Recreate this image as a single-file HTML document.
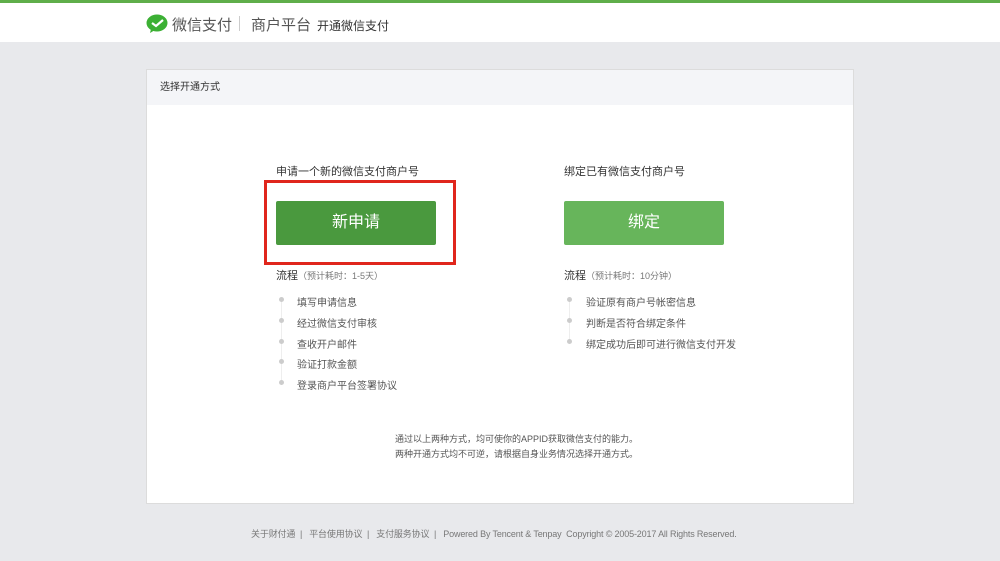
<html><head><style>
body{margin:0;width:1000px;height:561px;background:#e8e9ec;font-family:"Liberation Sans","Noto Sans CJK SC",sans-serif;position:relative;overflow:hidden;color:#333}
.a{position:absolute;white-space:nowrap}
.top{position:absolute;left:0;top:0;width:1000px;height:42px;background:#fff;border-top:3px solid #5fae4a;box-sizing:border-box}
.card{position:absolute;left:146px;top:69px;width:708px;height:435px;background:#fff;border:1px solid #dcdcdc;box-sizing:border-box}
.ch{height:35px;background:#f4f5f8;font-size:10px;line-height:35px;padding-left:13px}
.btn{position:absolute;width:160px;height:44px;color:#fff;font-size:16px;line-height:44px;text-align:center;border-radius:2px}
.li{position:absolute;font-size:10px;color:#555}
.dot{position:absolute;width:5px;height:5px;border-radius:50%;background:#ccc}
.ft{font-size:9px;color:#777}
</style></head><body>
<div class="top">
<svg class="a" style="left:146px;top:11px" width="22" height="20" viewBox="0 0 22 20"><ellipse cx="11" cy="9" rx="10.5" ry="8.5" fill="#3cb034"/><path d="M5 15 L4 19 L9 16Z" fill="#3cb034"/><path d="M6 9 L10 12 L17 6" stroke="#fff" stroke-width="2.2" fill="none"/></svg>
<div class="a" style="left:172px;top:11px;font-size:15px;color:#555">微信支付</div>
<div class="a" style="left:239px;top:13px;width:1px;height:15px;background:#ccc"></div>
<div class="a" style="left:251px;top:11px;font-size:15px;color:#555">商户平台</div>
<div class="a" style="left:317px;top:14px;font-size:12px;color:#333">开通微信支付</div>
</div>
<div class="card"><div class="ch">选择开通方式</div></div>
<div class="a" style="left:276px;top:163px;font-size:11px">申请一个新的微信支付商户号</div>
<div class="a" style="left:564px;top:163px;font-size:11px">绑定已有微信支付商户号</div>
<div class="a" style="left:264px;top:180px;width:192px;height:85px;border:3px solid #e0261c;box-sizing:border-box"></div>
<div class="btn" style="left:276px;top:201px;background:#4a993e">新申请</div>
<div class="btn" style="left:564px;top:201px;background:#67b55b">绑定</div>
<div class="a" style="left:276px;top:267px;font-size:11px">流程<span style="font-size:9px;color:#777">（预计耗时：1-5天）</span></div>
<div class="a" style="left:564px;top:267px;font-size:11px">流程<span style="font-size:9px;color:#777">（预计耗时：10分钟）</span></div>
<div class="a" style="left:281px;top:300px;width:1px;height:85px;background:#eee"></div>
<div class="dot" style="left:279px;top:297px"></div><div class="li" style="left:297px;top:294px">填写申请信息</div>
<div class="dot" style="left:279px;top:318px"></div><div class="li" style="left:297px;top:315px">经过微信支付审核</div>
<div class="dot" style="left:279px;top:339px"></div><div class="li" style="left:297px;top:336px">查收开户邮件</div>
<div class="dot" style="left:279px;top:359px"></div><div class="li" style="left:297px;top:356px">验证打款金额</div>
<div class="dot" style="left:279px;top:380px"></div><div class="li" style="left:297px;top:377px">登录商户平台签署协议</div>
<div class="a" style="left:569px;top:300px;width:1px;height:42px;background:#eee"></div>
<div class="dot" style="left:567px;top:297px"></div><div class="li" style="left:586px;top:294px">验证原有商户号帐密信息</div>
<div class="dot" style="left:567px;top:318px"></div><div class="li" style="left:586px;top:315px">判断是否符合绑定条件</div>
<div class="dot" style="left:567px;top:339px"></div><div class="li" style="left:586px;top:336px">绑定成功后即可进行微信支付开发</div>
<div class="a ft" style="left:395px;top:432px;color:#555">通过以上两种方式，均可使你的APPID获取微信支付的能力。</div>
<div class="a ft" style="left:395px;top:447px;color:#555">两种开通方式均不可逆，请根据自身业务情况选择开通方式。</div>
<div class="a ft" style="left:251px;top:527px;letter-spacing:-0.15px">关于财付通 &nbsp;|&nbsp;&nbsp; 平台使用协议 &nbsp;|&nbsp;&nbsp; 支付服务协议 &nbsp;|&nbsp;&nbsp; Powered By Tencent &amp; Tenpay &nbsp;Copyright © 2005-2017 All Rights Reserved.</div>
</body></html>
